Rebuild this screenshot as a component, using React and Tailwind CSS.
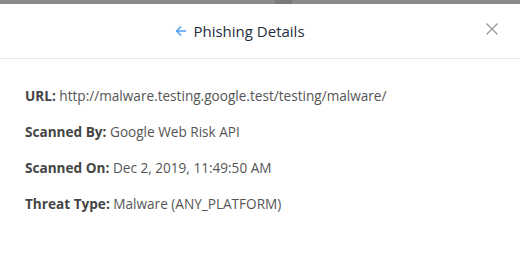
import React from "react";

const rows = [
  { label: "URL:", value: "http://malware.testing.google.test/testing/malware/" },
  { label: "Scanned By:", value: "Google Web Risk API" },
  { label: "Scanned On:", value: "Dec 2, 2019, 11:49:50 AM" },
  { label: "Threat Type:", value: "Malware (ANY_PLATFORM)" },
];

const App = () => {
  return (
    <div className="w-[520px] h-[257px] bg-white font-['Open_Sans',sans-serif] overflow-hidden">
      {/* top scrollbar strip */}
      <div className="h-[4px] bg-[#8a8a8a] flex">
        <div className="w-[275px]" />
        <div className="w-[17px] bg-[#7a7a7a]" />
      </div>

      {/* Header */}
      <div className="h-[55px] flex items-center justify-center relative border-b border-[#e8e8e8] pr-[40px]">
        <div className="flex items-center gap-[6px]">
          <svg width="12" height="12" viewBox="0 0 12 12" fill="none" stroke="#4a9ff5" strokeWidth="1.4">
            <path d="M11 6H1.5M6 1.5L1.5 6L6 10.5" />
          </svg>
          <span className="text-[15px] text-[#1f2d3d]">Phishing Details</span>
        </div>
        <button className="absolute right-[22px] top-[19px] text-[#999]">
          <svg width="12" height="12" viewBox="0 0 12 12" stroke="currentColor" strokeWidth="1.3">
            <path d="M0.5 0.5L11.5 11.5M11.5 0.5L0.5 11.5" />
          </svg>
        </button>
      </div>

      {/* Details */}
      <div className="pl-[25px] pt-[27px] flex flex-col gap-[16px]">
        {rows.map((r) => (
          <p key={r.label} className="text-[13.6px] leading-[20px] text-[#555]">
            <span className="font-bold text-[#444]">{r.label}</span> {r.value}
          </p>
        ))}
      </div>
    </div>
  );
};

export default App;
